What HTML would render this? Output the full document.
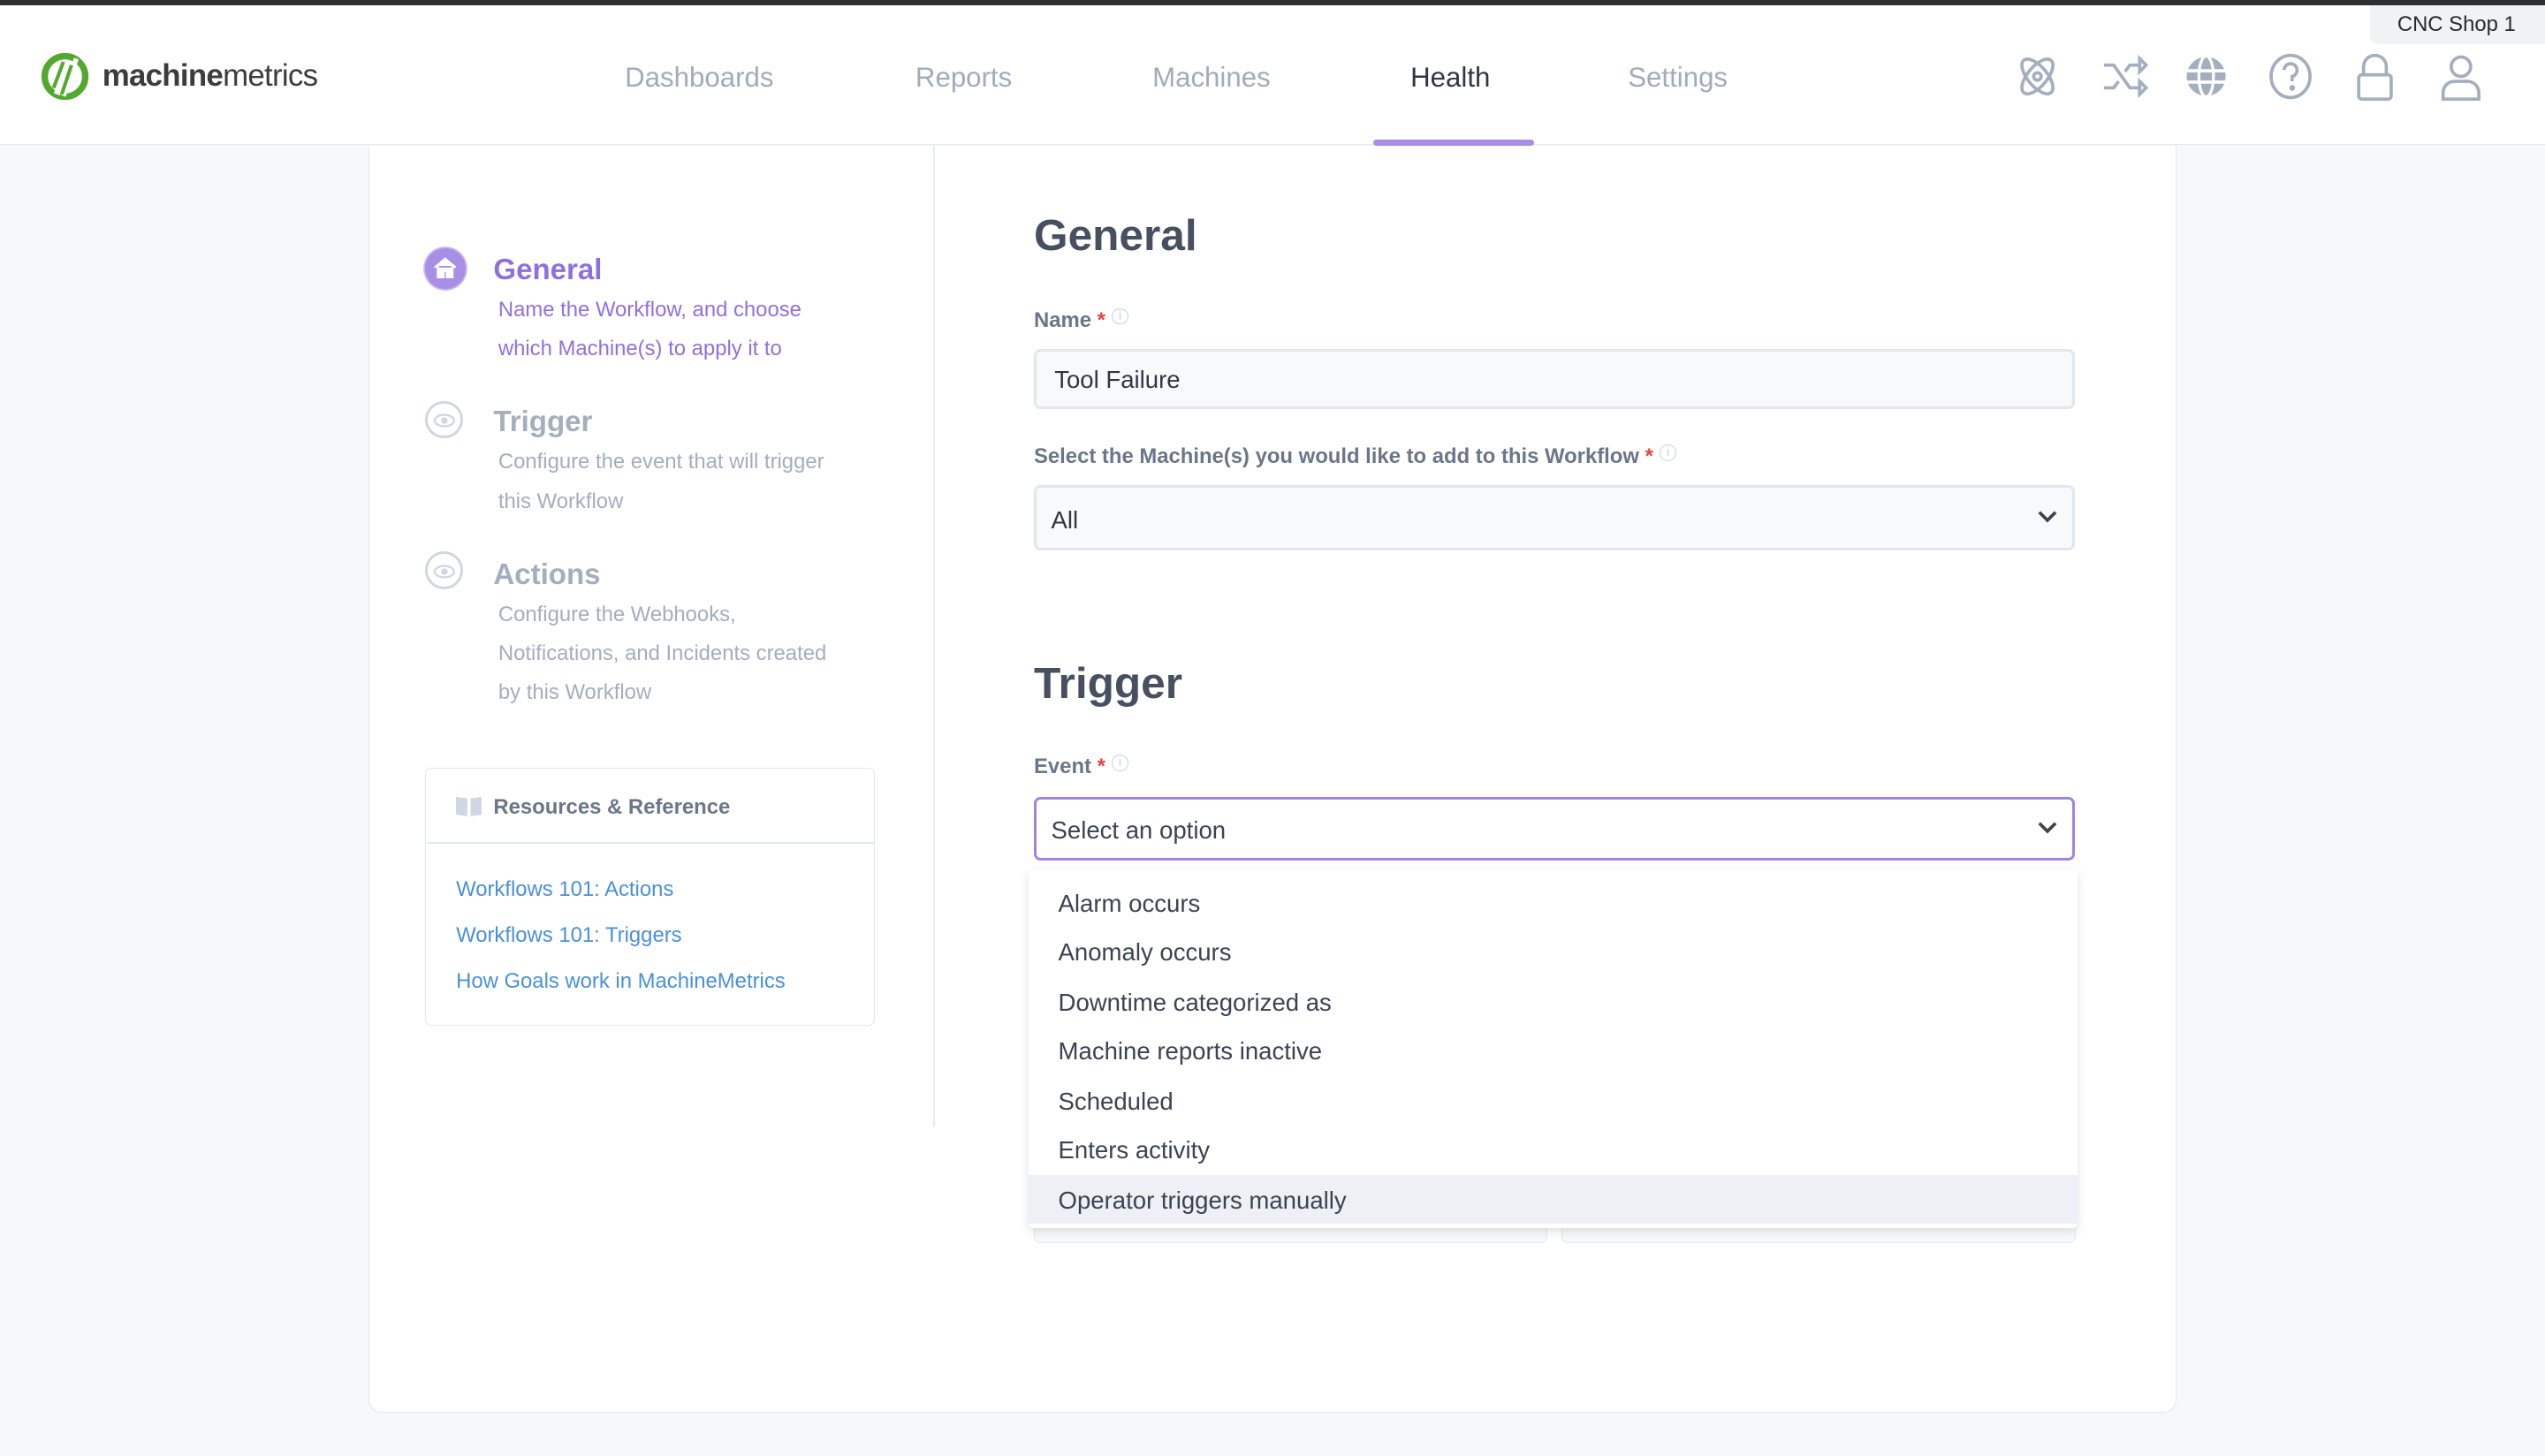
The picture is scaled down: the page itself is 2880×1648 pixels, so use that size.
<!DOCTYPE html>
<html><head><meta charset="utf-8"><style>
html,body{margin:0;padding:0;}
body{width:1568px;height:897px;zoom:1.836735;background:#f7f8fa;font-family:"Liberation Sans",Arial,sans-serif;position:relative;overflow:hidden;}
.abs{position:absolute;}
.top{left:0;top:0;width:1568px;height:3px;background:#2d2f33;}
.hdr{left:0;top:3px;width:1568px;height:86px;background:#fff;border-bottom:1px solid #e5e8ec;}
.nav{top:38px;font-size:17px;color:#a0abbb;}
.card{left:227px;top:90px;width:1113px;height:780px;background:#fff;border:1px solid #e3e7ec;border-top:none;border-radius:0 0 8px 8px;}
.vline{left:575px;top:90px;width:1px;height:604px;background:#e8ebef;}
.step{font-size:18px;font-weight:bold;color:#a3aebe;}
.desc{font-size:13px;color:#a3aebe;line-height:24px;}
.circ{width:20px;height:20px;border:2px solid #cfd7e2;border-radius:50%;}
h2{margin:0;font-size:27px;color:#475061;font-weight:bold;}
.lbl{font-size:13px;font-weight:bold;color:#6b7688;}
.lbl .r{color:#e2453c;}
.info{display:inline-block;width:9px;height:9px;border:1px solid #c8d0dc;border-radius:50%;font-size:8px;color:#c8d0dc;text-align:center;line-height:9px;vertical-align:top;margin-left:4px;font-weight:normal;}
.inp{left:637px;width:638px;background:#f8f9fb;border:2px solid #e2e7ee;border-radius:4px;font-size:15px;color:#2f3744;}
.opt{left:652px;font-size:15px;color:#3a4352;}
</style></head><body>
<div class="abs top"></div>
<div class="abs hdr"></div>
<svg class="abs" style="left:25px;top:32px" width="30" height="30" viewBox="0 0 30 30"><circle cx="15" cy="15" r="12.5" fill="none" stroke="#54a82f" stroke-width="4"/><path d="M10 26 L17 5" stroke="#fff" stroke-width="4"/><path d="M14 27 L22 4" stroke="#fff" stroke-width="3"/><path d="M8 22 L14 6 M13 26 L19 8" stroke="#54a82f" stroke-width="2.2"/></svg>
<div class="abs" style="left:63px;top:36px;font-size:19px;color:#3c3c3c;letter-spacing:-0.4px"><b>machine</b>metrics</div>
<div class="abs nav" style="left:385px">Dashboards</div>
<div class="abs nav" style="left:564px">Reports</div>
<div class="abs nav" style="left:710px">Machines</div>
<div class="abs nav" style="left:869px;color:#2f3744">Health</div>
<div class="abs nav" style="left:1003px">Settings</div>
<div class="abs" style="left:846px;top:86px;width:99px;height:4px;background:#a98ee6;border-radius:2px"></div>
<div class="abs" style="left:1460px;top:3px;width:108px;height:24px;background:#f1f2f4;border-radius:0 0 0 5px;font-size:13px;color:#2a2a2a;line-height:24px;text-indent:17px">CNC Shop 1</div>
<svg class="abs" style="left:1240px;top:32px" width="290" height="30" viewBox="0 0 290 30" fill="none" stroke="#a3aebe" stroke-width="2">
<ellipse cx="15" cy="15" rx="6" ry="13" transform="rotate(-40 15 15)"/><ellipse cx="15" cy="15" rx="6" ry="13" transform="rotate(40 15 15)"/><circle cx="15" cy="15" r="2.3"/>
<path d="M56 8h6l10 14h6 M56 22h6l3-4 M69 12l3-4h6 M78 4l4 4-4 4z M78 18l4 4-4 4z"/>
<circle cx="119" cy="15" r="12" fill="#a3aebe" stroke="none"/><path d="M107 11.5h24 M107 18.5h24" stroke="#fff" stroke-width="2"/><ellipse cx="119" cy="15" rx="4.5" ry="12.5" stroke="#fff" stroke-width="1.8"/>
<ellipse cx="171" cy="15" rx="12" ry="13"/><path d="M167 11a4 4 0 1 1 5 4v3"/><circle cx="172" cy="22" r="0.8" fill="#a3aebe"/>
<rect x="213" y="14" width="20" height="15" rx="2"/><path d="M216 14v-5a7 7 0 0 1 14 0v5"/>
<circle cx="276" cy="9" r="6"/><path d="M265 29v-4a7 7 0 0 1 7-7h8a7 7 0 0 1 7 7v4z"/>
</svg>
<div class="abs card"></div>
<div class="abs vline"></div>
<div class="abs" style="left:262px;top:153px;width:25px;height:25px;border-radius:50%;background:#a98ee6;box-shadow:0 0 0 1px #c7b6f2"></div>
<svg class="abs" style="left:267px;top:158px" width="15" height="14" viewBox="0 0 15 14"><path d="M1 7L7.5 1.5 14 7M3 6v7h3.5v-4h2v4H12V6" fill="#fff" stroke="#fff" stroke-width="1.3"/></svg>
<div class="abs step" style="left:304px;top:156px;color:#8f6fe0">General</div>
<div class="abs desc" style="left:307px;top:179px;color:#9170e0">Name the Workflow, and choose<br>which Machine(s) to apply it to</div>
<div class="abs circ" style="left:262px;top:247px"></div>
<svg class="abs" style="left:267px;top:253px" width="14" height="12" viewBox="0 0 14 12"><ellipse cx="7" cy="6" rx="6" ry="3.5" fill="none" stroke="#cfd7e2" stroke-width="1.3"/><circle cx="7" cy="6" r="2" fill="#cfd7e2"/></svg>
<div class="abs step" style="left:304px;top:250px">Trigger</div>
<div class="abs desc" style="left:307px;top:273px">Configure the event that will trigger<br>this Workflow</div>
<div class="abs circ" style="left:262px;top:340px"></div>
<svg class="abs" style="left:267px;top:346px" width="14" height="12" viewBox="0 0 14 12"><ellipse cx="7" cy="6" rx="6" ry="3.5" fill="none" stroke="#cfd7e2" stroke-width="1.3"/><circle cx="7" cy="6" r="2" fill="#cfd7e2"/></svg>
<div class="abs step" style="left:304px;top:344px">Actions</div>
<div class="abs desc" style="left:307px;top:367px">Configure the Webhooks,<br>Notifications, and Incidents created<br>by this Workflow</div>
<div class="abs" style="left:262px;top:473px;width:276px;height:158px;border:1px solid #e2e7ee;border-radius:4px;background:#fff"></div>
<div class="abs" style="left:263px;top:519px;width:276px;height:1px;background:#e2e7ee"></div>
<svg class="abs" style="left:281px;top:490px" width="16" height="13" viewBox="0 0 16 13"><path d="M0 1l7 1v11L0 12zM16 1l-7 1v11l7-1z" fill="#cfd7e2"/></svg>
<div class="abs" style="left:304px;top:490px;font-size:13px;font-weight:bold;color:#6b7688">Resources &amp; Reference</div>
<div class="abs" style="left:281px;top:534px;font-size:13px;color:#4a90d9;line-height:28.3px">Workflows 101: Actions<br>Workflows 101: Triggers<br>How Goals work in MachineMetrics</div>
<h2 class="abs" style="left:637px;top:129px">General</h2>
<div class="abs lbl" style="left:637px;top:190px">Name <span class="r">*</span><span class="info">i</span></div>
<div class="abs inp" style="top:215px;height:34px;line-height:35px;text-indent:11px">Tool Failure</div>
<div class="abs lbl" style="left:637px;top:274px">Select the Machine(s) you would like to add to this Workflow <span class="r">*</span><span class="info">i</span></div>
<div class="abs inp" style="top:299px;height:37px;line-height:40px;text-indent:9px">All</div>
<svg class="abs" style="left:1255px;top:314px" width="13" height="9" viewBox="0 0 13 9"><path d="M1.5 1.5l5 5 5-5" fill="none" stroke="#3a4352" stroke-width="2"/></svg>
<h2 class="abs" style="left:637px;top:405px">Trigger</h2>
<div class="abs lbl" style="left:637px;top:465px">Event <span class="r">*</span><span class="info">i</span></div>
<div class="abs" style="left:637px;top:491px;width:638px;height:36px;border:2px solid #a084e4;border-radius:4px;background:#fff;font-size:15px;color:#3a4352;line-height:38px;text-indent:9px">Select an option</div>
<svg class="abs" style="left:1255px;top:506px" width="13" height="9" viewBox="0 0 13 9"><path d="M1.5 1.5l5 5 5-5" fill="none" stroke="#3a4352" stroke-width="2"/></svg>
<div class="abs" style="left:637px;top:740px;width:315px;height:25px;border:1px solid #e2e7ee;border-radius:4px;background:#f8f9fb"></div>
<div class="abs" style="left:962px;top:740px;width:316px;height:25px;border:1px solid #e2e7ee;border-radius:4px;background:#f8f9fb"></div>
<div class="abs" style="left:634px;top:536px;width:646px;height:221px;background:#fff;border-radius:3px;box-shadow:0 2px 6px rgba(0,0,0,0.12)"></div>
<div class="abs" style="left:634px;top:724px;width:646px;height:30px;background:#eef0f5"></div>
<div class="abs opt" style="top:548px">Alarm occurs</div>
<div class="abs opt" style="top:578px">Anomaly occurs</div>
<div class="abs opt" style="top:609px">Downtime categorized as</div>
<div class="abs opt" style="top:639px">Machine reports inactive</div>
<div class="abs opt" style="top:670px">Scheduled</div>
<div class="abs opt" style="top:700px">Enters activity</div>
<div class="abs opt" style="top:731px">Operator triggers manually</div>
</body></html>
